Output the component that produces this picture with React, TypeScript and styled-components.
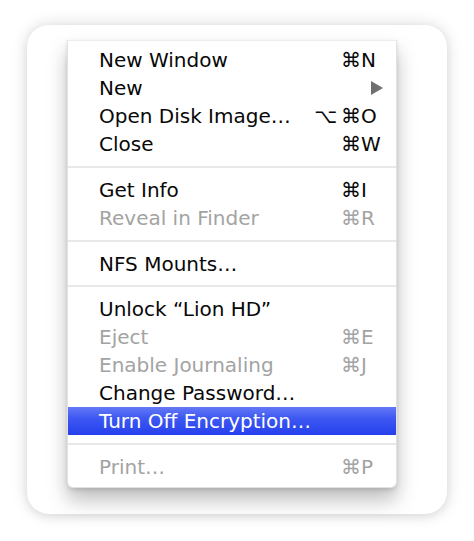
import styled, { createGlobalStyle } from "styled-components"

const GlobalStyle = createGlobalStyle`
  * { box-sizing: border-box; }
  body {
    margin: 0;
    background: #ffffff;
    font-family: "DejaVu Sans", "Liberation Sans", sans-serif;
  }
`

const Page = styled.div`
  width: 474px;
  height: 541px;
  padding: 25px 27px;
`

const Card = styled.div`
  width: 420px;
  height: 489px;
  background: #ffffff;
  border-radius: 22px;
  box-shadow: 0 0 16px rgba(0, 0, 0, 0.15), 0 3px 8px rgba(0, 0, 0, 0.06);
  padding: 15px 50px 26px 40px;
`

const Menu = styled.div`
  width: 330px;
  height: 448px;
  background: #ffffff;
  border: 1px solid #e2e2e2;
  border-top-color: #ececec;
  border-radius: 0 0 6px 6px;
  box-shadow: 0 12px 20px rgba(0, 0, 0, 0.26), 0 2px 4px rgba(0, 0, 0, 0.12);
  padding: 5px 0 6px;
  display: flex;
  flex-direction: column;
`

const Item = styled.div<{ $disabled?: boolean; $active?: boolean }>`
  height: 28px;
  display: grid;
  grid-template-columns: 1fr auto 20px;
  align-items: center;
  padding: 0 15px 0 31px;
  font-size: 20px;
  color: ${(p) => (p.$active ? "#ffffff" : p.$disabled ? "#a3a3a3" : "#080808")};
  background: ${(p) =>
    p.$active ? "linear-gradient(to bottom, #6479f5 0%, #3d58f2 40%, #2540ec 100%)" : "transparent"};
  white-space: nowrap;
`

// modifiers sit right-aligned against the key column
const Mods = styled.span`
  display: inline-flex;
  justify-content: flex-end;
  gap: 4px;
`

const Key = styled.span`
  text-align: left;
`

const Arrow = styled.span`
  justify-self: end;
  width: 0;
  height: 0;
  border-top: 7px solid transparent;
  border-bottom: 7px solid transparent;
  border-left: 12px solid #707070;
  margin-right: -2px;
`

const Separator = styled.div`
  height: 18px;
  display: flex;
  align-items: center;
  &::after {
    content: "";
    flex: 1;
    height: 2px;
    background: #e8e8e8;
  }
`

type Entry =
  | { label: string; mods?: string[]; key?: string; disabled?: boolean; active?: boolean; submenu?: boolean }
  | "sep"

const entries: Entry[] = [
  { label: "New Window", mods: ["⌘"], key: "N" },
  { label: "New", submenu: true },
  { label: "Open Disk Image…", mods: ["⌥", "⌘"], key: "O" },
  { label: "Close", mods: ["⌘"], key: "W" },
  "sep",
  { label: "Get Info", mods: ["⌘"], key: "I" },
  { label: "Reveal in Finder", mods: ["⌘"], key: "R", disabled: true },
  "sep",
  { label: "NFS Mounts…" },
  "sep",
  { label: "Unlock “Lion HD”" },
  { label: "Eject", mods: ["⌘"], key: "E", disabled: true },
  { label: "Enable Journaling", mods: ["⌘"], key: "J", disabled: true },
  { label: "Change Password…" },
  { label: "Turn Off Encryption…", active: true },
  "sep",
  { label: "Print…", mods: ["⌘"], key: "P", disabled: true },
]

const App = () => {
  return (
    <>
      <GlobalStyle />
      <Page>
        <Card>
          <Menu>
            {entries.map((e, i) =>
              e === "sep" ? (
                <Separator key={i} />
              ) : (
                <Item key={i} $disabled={e.disabled} $active={e.active}>
                  <span>{e.label}</span>
                  <Mods>
                    {e.mods?.map((m) => (
                      <span key={m}>{m}</span>
                    ))}
                  </Mods>
                  {e.submenu ? <Arrow /> : <Key>{e.key}</Key>}
                </Item>
              )
            )}
          </Menu>
        </Card>
      </Page>
    </>
  )
}

export default App
